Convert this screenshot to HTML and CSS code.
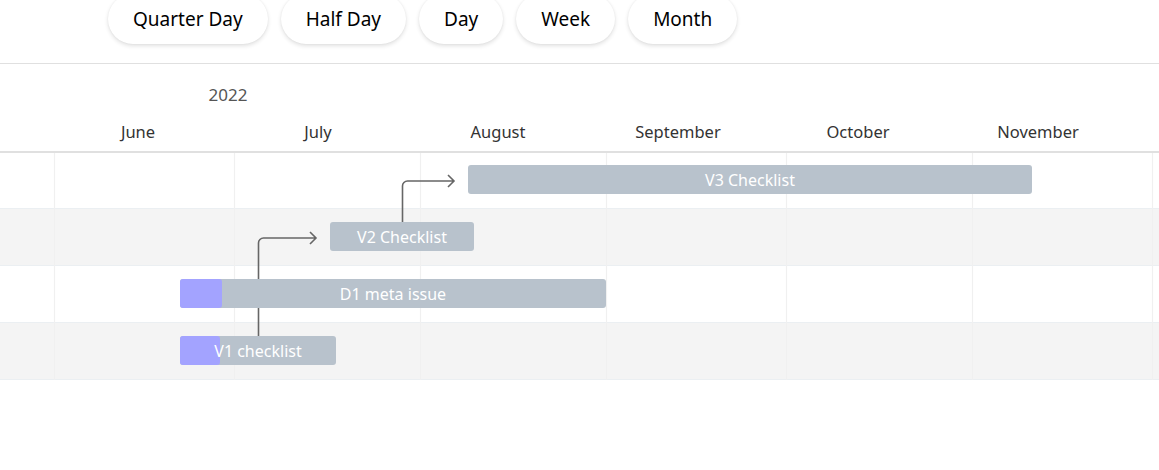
FILE: index.html
```html
<!DOCTYPE html>
<html>
<head>
<meta charset="utf-8">
<link rel="stylesheet" href="styles.css">
</head>
<body>
<div class="toolbar">
  <button class="mode">Quarter Day</button>
  <button class="mode">Half Day</button>
  <button class="mode">Day</button>
  <button class="mode">Week</button>
  <button class="mode">Month</button>
</div>
<svg class="gantt" width="1159" height="406" viewBox="0 64 1159 406" xmlns="http://www.w3.org/2000/svg">
  <g class="rows">
    <rect x="0" y="152" width="1159" height="57" class="row"/>
    <rect x="0" y="209" width="1159" height="57" class="row alt"/>
    <rect x="0" y="266" width="1159" height="57" class="row"/>
    <rect x="0" y="323" width="1159" height="57" class="row alt"/>
  </g>
  <g class="row-lines">
    <line x1="0" y1="208.5" x2="1159" y2="208.5"/>
    <line x1="0" y1="265.5" x2="1159" y2="265.5"/>
    <line x1="0" y1="322.5" x2="1159" y2="322.5"/>
    <line x1="0" y1="379.5" x2="1159" y2="379.5"/>
  </g>
  <g class="ticks">
    <line x1="54.5" y1="152" x2="54.5" y2="380"/>
    <line x1="234.5" y1="152" x2="234.5" y2="380"/>
    <line x1="420.5" y1="152" x2="420.5" y2="380"/>
    <line x1="606.5" y1="152" x2="606.5" y2="380"/>
    <line x1="786.5" y1="152" x2="786.5" y2="380"/>
    <line x1="972.5" y1="152" x2="972.5" y2="380"/>
    <line x1="1152.5" y1="152" x2="1152.5" y2="380"/>
  </g>
  <line class="header-line" x1="0" y1="152" x2="1159" y2="152"/>
  <text class="upper" x="228" y="101" text-anchor="middle">2022</text>
  <g class="lower">
    <text x="138" y="138" text-anchor="middle">June</text>
    <text x="318" y="138" text-anchor="middle">July</text>
    <text x="498" y="138" text-anchor="middle">August</text>
    <text x="678" y="138" text-anchor="middle">September</text>
    <text x="858" y="138" text-anchor="middle">October</text>
    <text x="1038" y="138" text-anchor="middle">November</text>
  </g>
  <g class="arrows">
    <path d="M 258.5 336 V 243 a 5 5 0 0 1 5 -5 H 316 m -6 -6 l 6 6 l -6 6"/>
    <path d="M 402.5 222 V 186 a 5 5 0 0 1 5 -5 H 454 m -6 -6 l 6 6 l -6 6"/>
  </g>
  <g class="bars">
    <rect class="bar" x="468" y="165" width="564" height="29" rx="3"/>
    <text class="bar-label" x="750" y="186" text-anchor="middle">V3 Checklist</text>
    <rect class="bar" x="330" y="222" width="144" height="29" rx="3"/>
    <text class="bar-label" x="402" y="243" text-anchor="middle">V2 Checklist</text>
    <rect class="bar" x="180" y="279" width="426" height="29" rx="3"/>
    <rect class="progress" x="180" y="279" width="42" height="29" rx="3"/>
    <text class="bar-label" x="393" y="300" text-anchor="middle">D1 meta issue</text>
    <rect class="bar" x="180" y="336" width="156" height="29" rx="3"/>
    <rect class="progress" x="180" y="336" width="40" height="29" rx="3"/>
    <text class="bar-label" x="258" y="357" text-anchor="middle">V1 checklist</text>
  </g>
</svg>
</body>
</html>
```
FILE: styles.css
```css
html, body {
  margin: 0;
  padding: 0;
  background: #fff;
  overflow: hidden;
}
body {
  font-family: "Noto Sans", "Open Sans", sans-serif;
  color: #000;
}
.toolbar {
  display: flex;
  gap: 13px;
  padding-left: 108px;
  margin-top: -6px;
  height: 70px;
  box-sizing: border-box;
  border-bottom: 1px solid #e0e0e0;
}
.mode {
  height: 50px;
  padding: 0 25px;
  border: none;
  border-radius: 25px;
  background: #fff;
  box-shadow: 0 2px 4px rgba(0, 0, 0, 0.12), 0 0 2px rgba(0, 0, 0, 0.06);
  font-family: "Noto Sans", "Open Sans", sans-serif;
  font-size: 19px;
  color: #000;
  cursor: pointer;
}
.gantt {
  display: block;
}
.row { fill: #fff; }
.row.alt { fill: #f4f4f4; }
.row-lines line { stroke: #ebeff2; stroke-width: 1; }
.ticks line { stroke: #f0f0f0; stroke-width: 1.2; }
.header-line { stroke: #e0e0e0; stroke-width: 2; }
.upper {
  font-family: "Noto Sans", sans-serif;
  font-size: 17px;
  fill: #555;
}
.lower text {
  font-family: "Noto Sans", sans-serif;
  font-size: 16.5px;
  fill: #333;
}
.arrows path {
  fill: none;
  stroke: #666;
  stroke-width: 1.6;
}
.bar { fill: #b8c2cc; }
.progress { fill: #a3a3ff; }
.bar-label {
  font-family: "Noto Sans", sans-serif;
  font-size: 16px;
  fill: #fff;
}
```
